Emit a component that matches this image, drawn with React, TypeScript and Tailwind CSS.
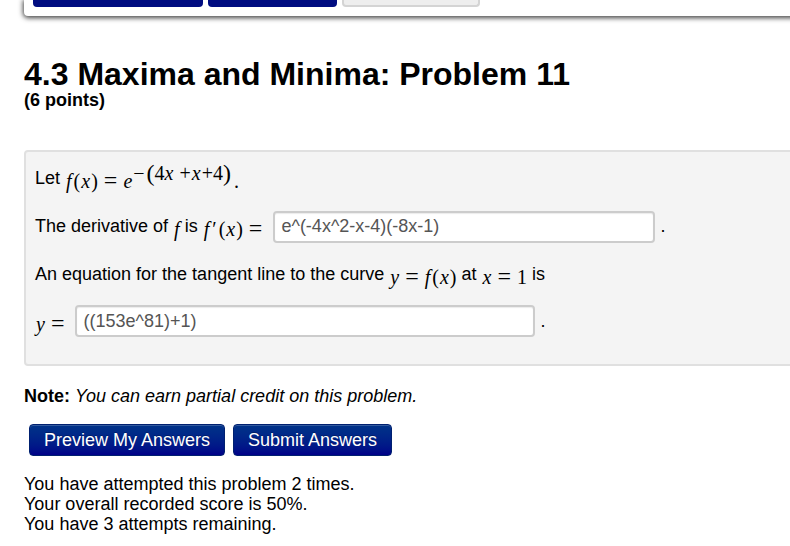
import type { ReactNode } from "react";

/** Inline formula, set slightly below the baseline of the surrounding prose. */
function Formula({ children }: { children: ReactNode }) {
  return (
    <span className="inline-flex items-baseline pl-px align-[-4px] font-['Liberation_Serif',serif] text-xl leading-5">
      {children}
    </span>
  );
}

function Eq() {
  return <span className="px-1.5 text-2xl leading-5">=</span>;
}

/** f(x), or f′(x) when primed. */
function Fx({ prime = false }: { prime?: boolean }) {
  return (
    <>
      <i>f</i>
      {prime && <span className="pl-[3px]">′</span>}
      <span className="pl-0.5">(</span>
      <i className="pl-px">x</i>
      <span className="pl-px">)</span>
    </>
  );
}

function AnswerInput({ label, value, width }: { label: string; value: string; width: string }) {
  return (
    <input
      type="text"
      aria-label={label}
      defaultValue={value}
      className={`${width} h-8 rounded-[4px] border-2 border-[#ccc] bg-white px-1.5 text-lg text-[#555] shadow-[inset_0_1px_1px_rgba(0,0,0,0.08)] outline-none`}
    />
  );
}

function PrimaryButton({ children }: { children: ReactNode }) {
  return (
    <button
      type="button"
      className="h-8 rounded-[4px] border border-[#002070] bg-linear-to-b from-[#003388] to-[#000088] px-3.5 text-lg leading-5 text-white shadow-[inset_0_1px_0_rgba(255,255,255,0.2)] [text-shadow:0_-1px_0_rgba(0,0,0,0.25)]"
    >
      {children}
    </button>
  );
}

export default function App() {
  return (
    <div className="overflow-hidden bg-white pb-3 pl-6 font-['Liberation_Sans',Arial,sans-serif] text-lg leading-5 text-black">
      {/* bottom edge of the navigation box */}
      <nav
        aria-label="Problem navigation"
        className="-mr-4 flex h-4 gap-[5px] rounded-b-[4px] pl-[9px] shadow-[0_1px_5px_1px_#444]"
      >
        <button type="button" aria-label="Previous problem" className="h-[7px] w-[170px] rounded-b-[4px] bg-[#000c80]" />
        <button type="button" aria-label="Problem list" className="h-[7px] w-[129px] rounded-b-[4px] bg-[#000c80]" />
        <button
          type="button"
          aria-label="Next problem"
          disabled
          className="h-[7px] w-[138px] rounded-b-[4px] border-x-2 border-b-2 border-[#d4d4d4] bg-[#eee]"
        />
      </nav>

      <header className="pt-[42px]">
        <h1 className="text-[32px] leading-8 font-bold">4.3 Maxima and Minima: Problem 11</h1>
        <p className="leading-5 font-bold">(6 points)</p>
      </header>

      <main>
        <section className="mt-10 -mr-2 flex flex-col gap-[15px] rounded-[4px] border-2 border-[#e0e0e0] bg-[#f4f4f4] px-[9px] pt-[9px] pb-[27px]">
          <p className="leading-[34px]">
            Let{" "}
            <Formula>
              <Fx />
              <Eq />
              <i>e</i>
              <sup className="-top-2 flex items-center text-xl leading-5">
                <span className="pl-px">−</span>
                <span className="pl-0.5 text-2xl leading-5">(</span>
                <span>4</span>
                <i>x</i>
                <span className="pl-[6px]">+</span>
                <i className="pl-px">x</i>
                <span className="pl-px">+4</span>
                <span className="text-2xl leading-5">)</span>
              </sup>
              <span className="pl-[3px]">.</span>
            </Formula>
          </p>
          <p className="leading-8">
            The derivative of{" "}
            <Formula>
              <i>f</i>
            </Formula>{" "}
            is{" "}
            <Formula>
              <Fx prime />
              <Eq />
            </Formula>{" "}
            <AnswerInput label="Derivative of f" value="e^(-4x^2-x-4)(-8x-1)" width="w-[382px]" /> .
          </p>
          <p className="leading-8">
            An equation for the tangent line to the curve{" "}
            <Formula>
              <i>y</i>
              <Eq />
              <Fx />
            </Formula>{" "}
            at{" "}
            <Formula>
              <i>x</i>
              <Eq />
              <span>1</span>
            </Formula>{" "}
            is
          </p>
          <p className="leading-8">
            <Formula>
              <i>y</i>
              <Eq />
            </Formula>{" "}
            <AnswerInput label="Tangent line y" value="((153e^81)+1)" width="w-[460px]" /> .
          </p>
        </section>

        <p className="mt-5">
          <b>Note:</b> <i>You can earn partial credit on this problem.</i>
        </p>

        <div className="mt-[18px] flex gap-2 pl-[5px]">
          <PrimaryButton>Preview My Answers</PrimaryButton>
          <PrimaryButton>Submit Answers</PrimaryButton>
        </div>

        <p className="mt-[18px]">
          You have attempted this problem 2 times.
          <br />
          Your overall recorded score is 50%.
          <br />
          You have 3 attempts remaining.
        </p>
      </main>
    </div>
  );
}
